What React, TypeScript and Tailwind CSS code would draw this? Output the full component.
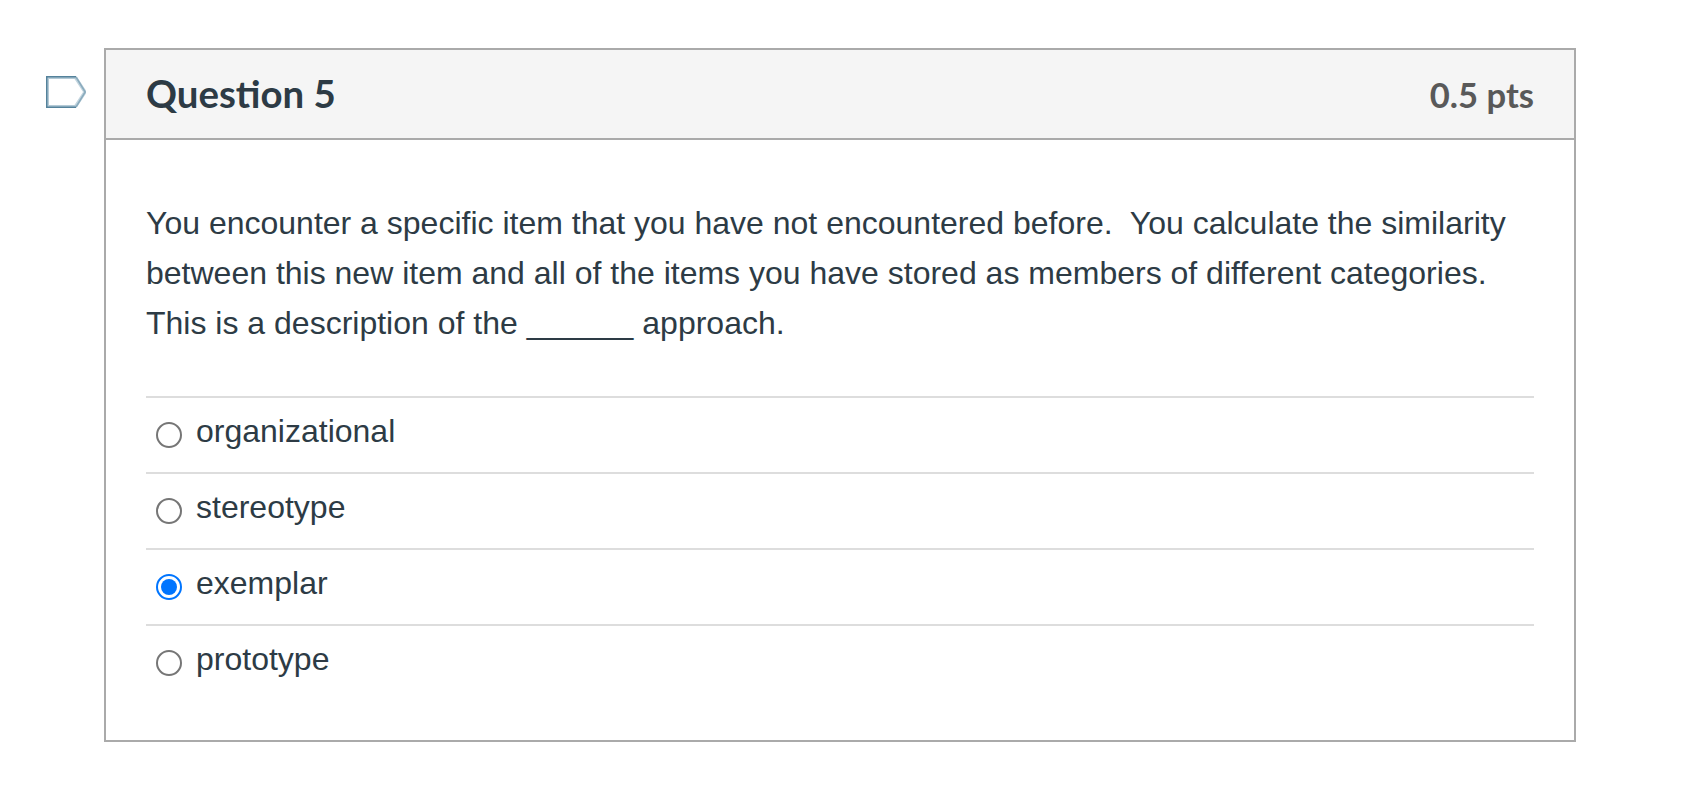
import React, { useState } from 'react';

interface Answer {
  value: string;
  label: string;
}

const answers: Answer[] = [
  { value: 'organizational', label: 'organizational' },
  { value: 'stereotype', label: 'stereotype' },
  { value: 'exemplar', label: 'exemplar' },
  { value: 'prototype', label: 'prototype' },
];

const FlagIcon: React.FC = () => (
  <svg width="40" height="32" viewBox="0 0 40 32" fill="none">
    <path d="M29.5 1.5L39 16L29.5 30.5" stroke="#c3d5df" strokeWidth="3.2" />
    <path d="M30 1.5H1.5V30.5H30" stroke="#b4cad6" strokeWidth="3" />
    <path d="M30 0.75H0.75V31.25H30" stroke="#54829b" strokeWidth="1.5" />
    <path d="M30 1L39.2 16L30 31" stroke="#8aabbd" strokeWidth="1.5" />
  </svg>
);

interface AnswerRowProps {
  answer: Answer;
  checked: boolean;
  onSelect: (value: string) => void;
}

const AnswerRow: React.FC<AnswerRowProps> = ({ answer, checked, onSelect }) => (
  <label className="flex h-[76px] items-start border-t-2 border-[#dddddd] pt-2 pl-[10px] cursor-pointer">
    <input
      type="radio"
      name="question-5"
      value={answer.value}
      checked={checked}
      onChange={() => onSelect(answer.value)}
      className="sr-only"
    />
    <span
      className={`mt-4 flex h-[26px] w-[26px] items-center justify-center rounded-full border-2 bg-white ${
        checked ? 'border-[#0075ff]' : 'border-[#767676]'
      }`}
    >
      {checked && <span className="h-4 w-4 rounded-full bg-[#0075ff]" />}
    </span>
    <span className="ml-[14px] leading-[50px]">{answer.label}</span>
  </label>
);

const App: React.FC = () => {
  const [selected, setSelected] = useState('exemplar');

  return (
    <div className="flex h-[786px] w-[1698px] items-start bg-white pt-12 pl-[46px] text-[#2d3b45]">
      <button type="button" aria-label="Flag question" className="mt-7 mr-[18px] block">
        <FlagIcon />
      </button>

      <div className="h-[694px] w-[1472px] border-2 border-[#aaaaaa] bg-white">
        {/* Header */}
        <div className="flex h-[90px] items-baseline justify-between border-b-2 border-[#aaaaaa] bg-[#f5f5f5] px-10 pt-[19px] font-['Lato',sans-serif] font-bold">
          <h2 className="text-[38.4px] leading-[48px]">Question 5</h2>
          <span className="text-[34.6px] leading-[48px] text-[#595959]">0.5 pts</span>
        </div>

        {/* Question text and answers */}
        <div className="px-10 pt-[58px] font-['Liberation_Sans',Arial,sans-serif] text-[32px]">
          <p className="mb-12 leading-[50px]">
            You encounter a specific item that you have not encountered before.&nbsp; You calculate the similarity
            <br />
            between this new item and all of the items you have stored as members of different categories.
            <br />
            This is a description of the ______ approach.
          </p>
          <div>
            {answers.map((answer) => (
              <AnswerRow
                key={answer.value}
                answer={answer}
                checked={selected === answer.value}
                onSelect={setSelected}
              />
            ))}
          </div>
        </div>
      </div>
    </div>
  );
};

export default App;
